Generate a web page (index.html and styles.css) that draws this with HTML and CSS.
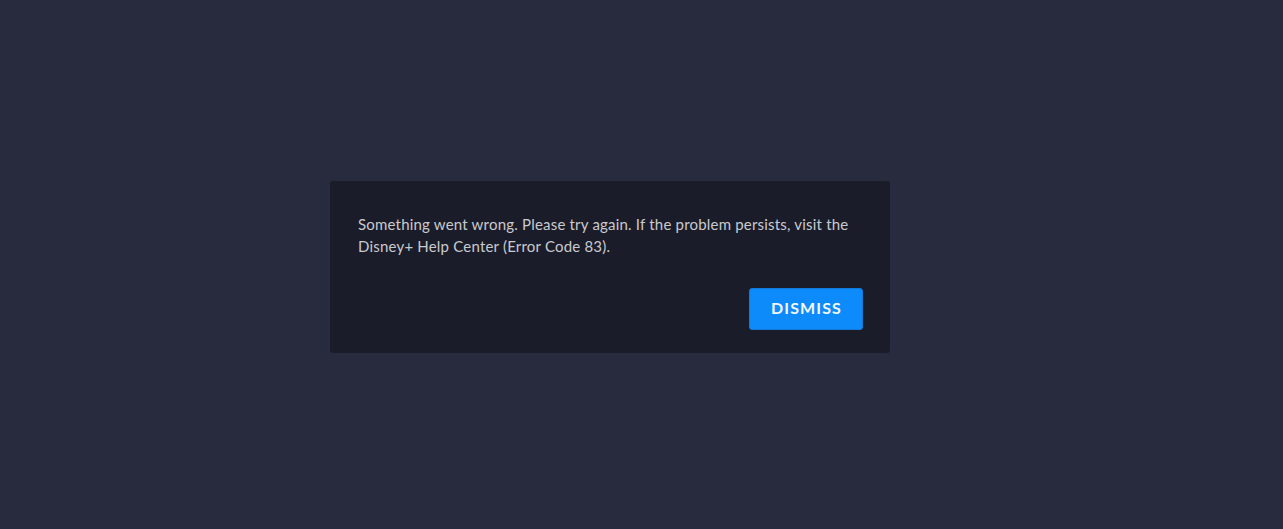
FILE: index.html
```html
<!DOCTYPE html>
<html lang="en">
<head>
<meta charset="utf-8">
<link rel="stylesheet" href="styles.css">
</head>
<body>
<div class="page">
  <div class="dialog">
    <p class="message">Something went wrong. Please try again. If the problem persists, visit the Disney+ Help Center (Error Code 83).</p>
    <div class="actions">
      <button class="dismiss">DISMISS</button>
    </div>
  </div>
</div>
</body>
</html>
```

FILE: styles.css
```css
html, body {
  margin: 0;
  padding: 0;
  height: 100%;
  background: #282b3d;
}
.page {
  height: 529px;
  display: flex;
  align-items: flex-start;
  justify-content: flex-start;
  padding: 181px 0 0 330px;
  box-sizing: border-box;
}
.dialog {
  width: 560px;
  height: 172px;
  box-sizing: border-box;
  background: #1b1c29;
  border-radius: 3px;
  padding: 32px 27px 23px 28px;
  display: flex;
  flex-direction: column;
}
.message {
  margin: 0;
  font-family: Lato, "Noto Sans", sans-serif;
  font-size: 15px;
  letter-spacing: 0.2px;
  line-height: 22px;
  color: #c9cacf;
}
.actions {
  margin-top: auto;
  display: flex;
  justify-content: flex-end;
}
.dismiss {
  width: 114px;
  height: 42px;
  background: #0d8bfb;
  border: 1px solid #1478d6;
  border-radius: 3px;
  color: #f4f8ff;
  font-family: Lato, "Noto Sans", sans-serif;
  font-weight: 700;
  font-size: 16px;
  letter-spacing: 1.1px;
  padding: 0 0 3px 1px;
}
```
